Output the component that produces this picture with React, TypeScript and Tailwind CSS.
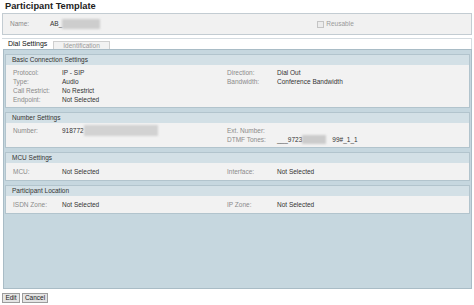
const SECTIONS = [
  {
    title: "Basic Connection Settings",
    left: [
      ["Protocol:", "IP - SIP"],
      ["Type:", "Audio"],
      ["Call Restrict:", "No Restrict"],
      ["Endpoint:", "Not Selected"],
    ],
    right: [
      ["Direction:", "Dial Out"],
      ["Bandwidth:", "Conference Bandwidth"],
    ],
  },
  {
    title: "Number Settings",
    left: [["Number:", "number"]],
    right: [
      ["Ext. Number:", ""],
      ["DTMF Tones:", "dtmf"],
    ],
  },
  {
    title: "MCU Settings",
    left: [["MCU:", "Not Selected"]],
    right: [["Interface:", "Not Selected"]],
  },
  {
    title: "Participant Location",
    left: [["ISDN Zone:", "Not Selected"]],
    right: [["IP Zone:", "Not Selected"]],
  },
];

function Smudge({ w }: { w: string }) {
  return <span className={`inline-block h-[10px] ${w} bg-[#cdcdcd] blur-[1px] align-middle`} />;
}

function Value({ v }: { v: string }) {
  if (v === "number")
    return (
      <span className="flex items-center">
        918772
        <span className="inline-block h-[11px] w-[74px] bg-[#d2d2d2] blur-[1px]" />
      </span>
    );
  if (v === "dtmf")
    return (
      <span className="flex items-center">
        ___9723
        <span className="inline-block h-[9px] w-[24px] bg-[#cbcbcb] blur-[1px]" />
        <span className="ml-[6px]">99#_1_1</span>
      </span>
    );
  return <span>{v}</span>;
}

function Rows({ rows, labelW }: { rows: string[][]; labelW: string }) {
  return (
    <div className="flex flex-col">
      {rows.map(([label, value]) => (
        <div key={label} className="flex h-[9px] items-center">
          <span className={`${labelW} shrink-0 text-[#8a8a8a]`}>{label}</span>
          <Value v={value} />
        </div>
      ))}
    </div>
  );
}

export default function App() {
  return (
    <div className="w-[474px] h-[305px] overflow-hidden bg-white font-['Liberation_Sans',Arial,sans-serif] text-[6.5px] text-[#333]">
      <h1 className="h-[13px] pl-[5px] text-[9.3px] font-bold leading-[13px] text-[#222]">
        Participant Template
      </h1>

      <div className="ml-[2px] flex h-[22px] w-[470px] items-center border border-[#c3ccd2] bg-[#f1f1f1]">
        <span className="ml-[7px] w-[40px] text-[#8a8a8a]">Name:</span>
        <span>AB_</span>
        <Smudge w="w-[38px]" />
        <span className="ml-[217px] h-[7px] w-[7px] border border-[#c4c4c4] bg-[#ececec]" />
        <span className="ml-[2px] text-[#9a9a9a]">Reusable</span>
      </div>

      <div className="ml-[2px] mt-[3px] flex h-[11px] w-[470px] items-end border-r border-t border-[#d4dbe0] bg-white">
        <div className="flex h-[10px] items-center px-[6px] text-[7px] text-[#111]">Dial Settings</div>
        <div className="flex h-[8px] items-center border border-b-0 border-[#cfcfcf] bg-[#f2f2f2] px-[9px] text-[#999]">
          Identification
        </div>
      </div>

      <div className="ml-[3px] flex h-[240px] w-[469px] flex-col gap-[4px] border border-[#a9bcc6] bg-[#c6d7df] px-[1px] pt-[4px]">
        {SECTIONS.map((s) => (
          <div key={s.title} className="border border-[#b2c4cd] bg-[#f2f2f2]">
            <div className="flex h-[10px] items-center bg-[#d3e0e6] pl-[6px] text-[#333]">
              {s.title}
            </div>
            <div className={s.right.length > 1 ? "flex py-[3px] pl-[7px]" : "flex py-[4px] pl-[7px]"}>
              <div className="w-[214px]">
                <Rows rows={s.left} labelW="w-[49px]" />
              </div>
              <Rows rows={s.right} labelW="w-[50px]" />
            </div>
          </div>
        ))}
      </div>

      <div className="ml-[2px] mt-[4px] flex gap-[2px]">
        <button className="h-[10px] w-[18px] border border-[#9c9c9c] bg-[#e4e4e4] text-[6.5px] leading-[8px] text-[#222]">
          Edit
        </button>
        <button className="h-[10px] w-[26px] border border-[#9c9c9c] bg-[#e4e4e4] text-[6.5px] leading-[8px] text-[#222]">
          Cancel
        </button>
      </div>
    </div>
  );
}
